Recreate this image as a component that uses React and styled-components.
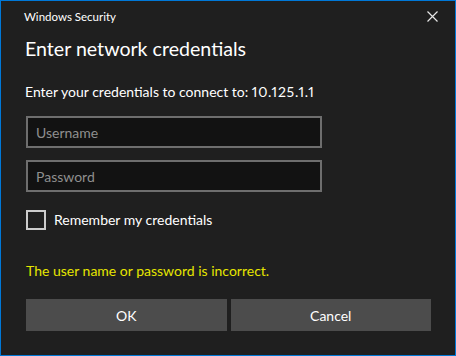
import React from "react";
import styled, { createGlobalStyle } from "styled-components";

const GlobalStyle = createGlobalStyle`
  html, body {
    margin: 0;
    padding: 0;
    background: #1f1f1f;
  }
  body {
    font-family: Lato, "Noto Sans", sans-serif;
    font-feature-settings: "pnum";
    font-variant-numeric: proportional-nums;
  }
`;

export default function App() {
  return (
    <>
      <GlobalStyle />
      <Window>
        <TitleBar>
          <TitleText>Windows Security</TitleText>
          <CloseButton aria-label="Close">
            <svg width="11" height="11" viewBox="0 0 11 11">
              <path d="M0.5 0.5 L10.5 10.5 M10.5 0.5 L0.5 10.5" stroke="#e6e6e6" strokeWidth="1.2" fill="none" />
            </svg>
          </CloseButton>
        </TitleBar>
        <Content>
          <Heading>Enter network credentials</Heading>
          <Prompt>
            Enter your credentials to connect to: <Address>10.125.1.1</Address>
          </Prompt>
          <Field placeholder="Username" />
          <Field type="password" placeholder="Password" $gap={12} />
          <CheckRow>
            <Box />
            <CheckLabel>Remember my credentials</CheckLabel>
          </CheckRow>
          <ErrorText>The user name or password is incorrect.</ErrorText>
          <ButtonRow>
            <Button>OK</Button>
            <Button>Cancel</Button>
          </ButtonRow>
        </Content>
      </Window>
    </>
  );
}

const Window = styled.div`
  width: 456px;
  height: 356px;
  box-sizing: border-box;
  border: 1px solid #0078d7;
  background: #1f1f1f;
  color: #ffffff;
  display: flex;
  flex-direction: column;
`;

const TitleBar = styled.div`
  height: 31px;
  display: flex;
  align-items: center;
  justify-content: space-between;
  padding-left: 23px;
`;

const TitleText = styled.span`
  font-size: 11.5px;
  color: #ffffff;
`;

const CloseButton = styled.div`
  width: 46px;
  height: 31px;
  display: flex;
  align-items: center;
  justify-content: center;
`;

const Content = styled.div`
  display: flex;
  flex-direction: column;
  padding: 0 24px;
`;

const Heading = styled.div`
  font-size: 19.6px;
  line-height: 26px;
  margin-top: 4px;
  color: #ffffff;
`;

const Prompt = styled.div`
  font-size: 14px;
  line-height: 20px;
  margin-top: 20px;
  color: #ffffff;
`;

const Address = styled.span`
  letter-spacing: 0.8px;
`;

const Field = styled.input`
  width: 296px;
  height: 32px;
  box-sizing: border-box;
  margin: ${(p) => p.$gap || 14}px 0 0 1px;
  padding: 0 8px;
  background: #121212;
  border: 2px solid #6e6e6e;
  color: #ffffff;
  font-family: inherit;
  font-size: 14px;
  outline: none;

  &::placeholder {
    color: #8f8f8f;
  }
`;

const CheckRow = styled.div`
  display: flex;
  align-items: center;
  gap: 8px;
  margin: 18px 0 0 1px;
`;

const Box = styled.div`
  width: 20px;
  height: 20px;
  box-sizing: border-box;
  border: 2px solid #cccccc;
`;

const CheckLabel = styled.span`
  font-size: 14px;
  line-height: 20px;
`;

const ErrorText = styled.div`
  font-size: 14px;
  line-height: 20px;
  margin: 31px 0 0 1px;
  color: #e6e600;
`;

const ButtonRow = styled.div`
  display: flex;
  gap: 4px;
  margin: 18px 0 0 1px;
`;

const Button = styled.div`
  width: 201px;
  height: 32px;
  background: #4c4c4c;
  color: #ffffff;
  font-size: 14px;
  display: flex;
  align-items: center;
  justify-content: center;
`;
